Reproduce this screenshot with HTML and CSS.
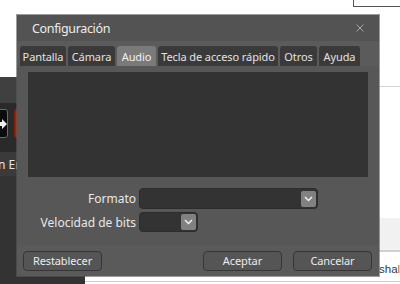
FILE: index.html
```html
<!DOCTYPE html>
<html lang="es">
<head>
<meta charset="utf-8">
<title>Configuración</title>
<link rel="stylesheet" href="styles.css">
</head>
<body>
<div class="desk">
  <div class="bg-left">
    <div class="bl-top"></div>
    <div class="bl-a"></div>
    <div class="bl-toolbar">
      <div class="bl-icon">
        <svg width="9" height="12" viewBox="0 0 9 12"><path d="M0 4h4V1l5 5-5 5V8H0z" fill="#eee"/></svg>
      </div>
      <div class="bl-red"></div>
    </div>
    <div class="bl-status">n Er</div>
    <div class="bl-rest"></div>
  </div>
  <div class="bg-right">
    <div class="br-box"></div>
    <div class="br-line"></div>
    <div class="br-band"></div>
    <div class="br-text">sha<span class="br-accent">l</span></div>
    <div class="br-bottom"></div>
  </div>

  <div class="dialog">
    <div class="titlebar">
      <span class="title">Configuración</span>
      <svg class="close" width="8" height="8" viewBox="0 0 8 8"><path d="M0.5 0.5L7.5 7.5M7.5 0.5L0.5 7.5" stroke="#a8a8a8" stroke-width="1" fill="none"/></svg>
    </div>
    <div class="tabs">
      <div class="tab w-pantalla">Pantalla</div>
      <div class="tab w-camara">Cámara</div>
      <div class="tab active w-audio">Audio</div>
      <div class="tab w-tecla">Tecla de acceso rápido</div>
      <div class="tab w-otros">Otros</div>
      <div class="tab w-ayuda">Ayuda</div>
    </div>
    <div class="page">
      <div class="pane"></div>
      <div class="form">
        <label class="lbl">Formato</label>
        <div class="combo combo-wide">
          <span class="drop"><svg width="9" height="6" viewBox="0 0 9 6"><path d="M1 1l3.5 3.5L8 1" stroke="#f2f2f2" stroke-width="1.5" fill="none"/></svg></span>
        </div>
        <label class="lbl">Velocidad de bits</label>
        <div class="combo combo-small">
          <span class="drop"><svg width="9" height="6" viewBox="0 0 9 6"><path d="M1 1l3.5 3.5L8 1" stroke="#f2f2f2" stroke-width="1.5" fill="none"/></svg></span>
        </div>
      </div>
    </div>
    <div class="footer">
      <button class="btn">Restablecer</button>
      <span class="spacer"></span>
      <button class="btn">Aceptar</button>
      <button class="btn">Cancelar</button>
    </div>
  </div>
</div>
</body>
</html>
```

FILE: styles.css
```css
body {
  margin: 0;
  background: #fff;
}

.desk {
  position: relative;
  width: 400px;
  height: 284px;
  display: flex;
  overflow: hidden;
  background: #fff;
  font-family: "Noto Sans", "Open Sans", sans-serif;
}

/* background application (left) */
.bg-left {
  width: 85px;
  display: flex;
  flex-direction: column;
}
.bl-top { height: 77px; background: #fff; }
.bl-a { height: 26px; background: #404040; }
.bl-toolbar {
  height: 49px;
  background: #2a2a2a;
  display: flex;
  align-items: flex-start;
  padding-top: 6px;
  box-sizing: border-box;
}
.bl-icon {
  width: 11px;
  height: 29px;
  margin-left: -3px;
  box-sizing: border-box;
  border: 1px solid #6a6a6a;
  border-radius: 3px;
  background: #0c0c0c;
  display: flex;
  align-items: center;
  justify-content: flex-end;
  overflow: hidden;
}
.bl-red {
  width: 12px;
  height: 29px;
  margin-left: 6px;
  border-radius: 3px;
  background: linear-gradient(to right, #7a1a08, #d2360f 40%, #b82a0a);
}
.bl-status {
  height: 24px;
  background: #3a3a3a;
  color: #e6e6e6;
  font-size: 12px;
  line-height: 26px;
  text-indent: -2px;
  white-space: nowrap;
}
.bl-rest { flex: 1; background: #333; }

/* background page (right) */
.bg-right {
  flex: 1;
  display: flex;
  flex-direction: column;
  background: #fff;
}
.br-box {
  width: 47px;
  height: 7px;
  margin-left: auto;
  border-left: 1px solid #555;
  border-bottom: 1px solid #555;
  box-sizing: border-box;
}
.br-line {
  height: 1px;
  margin-top: 79px;
  background: #d4d4d4;
}
.br-band {
  height: 32px;
  margin-top: 131px;
  background: #f1f1f1;
  border-bottom: 2px solid #cfcfcf;
}
.br-text {
  align-self: flex-end;
  width: 21px;
  margin-top: 9px;
  font-family: "Liberation Sans", sans-serif;
  font-size: 11.5px;
  line-height: 16px;
  color: #2e3a4a;
  white-space: nowrap;
}
.br-accent { color: #b86a2a; }
.br-bottom {
  height: 1px;
  margin-top: 4px;
  background: #cfcfcf;
}

/* dialog window */
.dialog {
  position: absolute;
  left: 17px;
  top: 15px;
  width: 362px;
  height: 261px;
  background: #575757;
  display: flex;
  flex-direction: column;
  color: #e6e6e6;
  box-shadow: 0 0 0 1px rgba(90, 90, 90, 0.6);
}
.titlebar {
  height: 26px;
  flex: none;
  background: #535353;
  display: flex;
  align-items: center;
  justify-content: space-between;
  padding: 0 15px;
  box-sizing: border-box;
}
.title {
  font-size: 12.5px;
  letter-spacing: -0.35px;
  color: #ececec;
}
.close { display: block; }

.tabs {
  display: flex;
  gap: 2px;
  padding: 5px 0 0 3px;
  height: 25px;
  box-sizing: border-box;
  background: #5b5b5b;
  flex: none;
}
.tab {
  height: 20px;
  border-radius: 3px 3px 0 0;
  background: #3a3a3a;
  color: #e2e2e2;
  font-size: 11px;
  letter-spacing: -0.1px;
  line-height: 21px;
  text-align: center;
  white-space: nowrap;
}
.tab.active { background: #7a7a7a; color: #f0f0f0; }
.w-pantalla { width: 46px; }
.w-camara { width: 47px; }
.w-audio { width: 39px; }
.w-tecla { width: 120px; }
.w-otros { width: 37px; }
.w-ayuda { width: 41px; }

.page {
  padding: 6px 11px 0;
}
.pane {
  height: 105px;
  background: #333;
}
.form {
  display: grid;
  grid-template-columns: 108px auto;
  column-gap: 3px;
  row-gap: 3px;
  margin-top: 11px;
  align-items: center;
}
.lbl {
  font-size: 12px;
  text-align: right;
  color: #e8e8e8;
  white-space: nowrap;
}
.combo {
  height: 21px;
  box-sizing: border-box;
  background: #333;
  border: 1px solid #2c2c2c;
  border-radius: 4px;
  display: flex;
  align-items: center;
  justify-content: flex-end;
  padding-right: 1px;
}
.combo-wide { width: 179px; }
.combo-small { width: 59px; height: 20px; }
.drop {
  width: 15px;
  height: 16px;
  background: #818181;
  border-radius: 2px;
  display: flex;
  align-items: center;
  justify-content: center;
}
.drop svg { display: block; }

.footer {
  margin-top: auto;
  height: 31px;
  box-sizing: border-box;
  background: #5a5a5a;
  display: flex;
  align-items: flex-start;
  padding: 6px 7px 0 6px;
  gap: 11px;
}
.spacer { flex: 1; }
.btn {
  width: 79px;
  height: 20px;
  box-sizing: border-box;
  border: 1px solid #363636;
  border-radius: 4px;
  background: #555;
  color: #ececec;
  font-family: "Noto Sans", "Open Sans", sans-serif;
  font-size: 11px;
  letter-spacing: -0.1px;
  line-height: 18px;
  padding: 0;
  text-align: center;
}
```
